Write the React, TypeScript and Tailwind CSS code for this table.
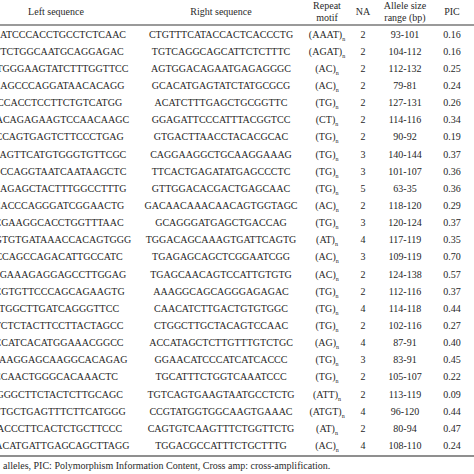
import React from "react";

type Row = [string, string, string, string, string, string, string];

const rows: Row[] = [
  ["GCA", "TCCCACCTGCCTCTCAAC", "CTGTTTCATACCACTCACCCTG", "AAAT", "2", "93-101", "0.16"],
  ["AT", "TCTGGCAATGCAGGAGAC", "TGTCAGGCAGCATTCTCTTTC", "AGAT", "2", "104-112", "0.16"],
  ["CT", "TGGGAAGTATCTTTGGTTCC", "AGTGGACAGAATGAGAGGGC", "AC", "2", "112-132", "0.25"],
  ["TC", "AGCCCAGGATAACACAGG", "GCACATGAGTATCTATGCGCG", "AC", "2", "79-81", "0.24"],
  ["G", "CCACCTCCTTCTGTCATGG", "ACATCTTTGAGCTGCGGTTC", "TG", "2", "127-131", "0.26"],
  ["TCA", "CAGAGAAGTCCAACAAGC", "GGAGATTCCCATTTACGGTCC", "CT", "2", "114-116", "0.34"],
  ["AC", "CAGTGAGTCTTCCCTGAG", "GTGACTTAACCTACACGCAC", "TG", "2", "90-92", "0.19"],
  ["GCA", "GTTCATGTGGGTGTTCGC", "CAGGAAGGCTGCAAGGAAAG", "TG", "3", "140-144", "0.37"],
  ["AG", "CCAGGTAATCAATAAGCTC", "TTCACTGAGATATGAGCCCTC", "TG", "3", "101-107", "0.36"],
  ["GA", "AGAGCTACTTTGGCCTTTG", "GTTGGACACGACTGAGCAAC", "TG", "5", "63-35", "0.36"],
  ["TC", "ACCCAGGGATCGGAACTG", "GACAACAAACAACAGTGGTAGC", "AC", "2", "118-120", "0.29"],
  ["TC", "GAAGGCACCTGGTTTAAC", "GCAGGGATGAGCTGACCAG", "TG", "3", "120-124", "0.37"],
  ["CAG", "TGTGATAAACCACAGTGGG", "TGGACAGCAAAGTGATTCAGTG", "AT", "4", "117-119", "0.35"],
  ["TC", "CAGCCAGACATTGCCATC", "TGAGAGCAGCTCGGAATCGG", "AC", "3", "109-119", "0.70"],
  ["AC", "GAAAGAGGAGCCTTGGAG", "TGAGCAACAGTCCATTGTGTG", "AC", "2", "124-138", "0.57"],
  ["AC", "GTGTTCCCAGCAGAAGTG", "AAAGGCAGCAGGGAGAGAC", "TG", "2", "112-116", "0.37"],
  ["T", "TGGCTTGATCAGGGTTCC", "CAACATCTTGACTGTGTGGC", "TG", "4", "114-118", "0.44"],
  ["T", "TCTCTACTTCCTTACTAGCC", "CTGGCTTGCTACAGTCCAAC", "TG", "2", "102-116", "0.27"],
  ["TC", "CATCACATGGAAACGGCC", "ACCATAGCTCTTGTTTGTCTGC", "AG", "4", "87-91", "0.40"],
  ["GA", "AAGGAGCAAGGCACAGAG", "GGAACATCCCATCATCACCC", "TG", "3", "83-91", "0.45"],
  ["C", "CAACTGGGCACAAACTC", "TGCATTTCTGGTCAAATCCC", "TG", "2", "105-107", "0.22"],
  ["A", "GGGCTTCTACTCTTGCAGC", "TGTCAGTGAAGTAATGCCTCTG", "ATT", "2", "113-119", "0.09"],
  ["AC", "TGCTGAGTTTCTTCATGGG", "CCGTATGGTGGCAAGTGAAAC", "ATGT", "4", "96-120", "0.44"],
  ["GA", "CCCTTCACTCTGCTTCCC", "CAGTGTCAAGTTTCTGGTTCTG", "AT", "2", "80-94", "0.47"],
  ["TCA", "CATGATTGAGCAGCTTAGG", "TGGACGCCATTTCTGCTTTG", "AC", "4", "108-110", "0.24"],
];

const grid = "grid grid-cols-[140px_162px_50px_22px_62px_32px]";
const cell = "flex justify-center items-center";

export default function App() {
  return (
    <div className="w-[474px] h-[474px] overflow-hidden bg-white text-[#1f1f1f] font-['Liberation_Serif',serif] text-[10px] leading-[12px]">
      <div className={`${grid} h-[26px] items-center border-b-2 border-[#9a9a9a] text-[#2a2a2a]`}>
        <div className={`${cell} pr-[28px]`}>
          <span className="whitespace-nowrap">Left sequence</span>
        </div>
        <div className={cell}>
          <span className="whitespace-nowrap">Right sequence</span>
        </div>
        <div className={`${cell} flex-col text-center`}>
          <span>Repeat</span>
          <span>motif</span>
        </div>
        <div className={cell}>NA</div>
        <div className={`${cell} flex-col text-center`}>
          <span className="whitespace-nowrap">Allele size</span>
          <span className="whitespace-nowrap">range (bp)</span>
        </div>
        <div className={cell}>PIC</div>
      </div>

      <div className="border-b-2 border-[#8f8f8f]">
        {rows.map((r, i) => (
          <div key={i} className={`${grid} h-[17.15px] items-center`}>
            <div className={`${cell} pr-[28px]`}>
              <span className="shrink-0 whitespace-nowrap">
                {r[0]}
                {r[1]}
              </span>
            </div>
            <div className={cell}>
              <span className="shrink-0 whitespace-nowrap">{r[2]}</span>
            </div>
            <div className={cell}>
              <span className="whitespace-nowrap">
                ({r[3]})
                <span className="relative top-[3px] text-[6px] leading-none">n</span>
              </span>
            </div>
            <div className={cell}>{r[4]}</div>
            <div className={cell}>{r[5]}</div>
            <div className={cell}>{r[6]}</div>
          </div>
        ))}
      </div>

      <div className="h-[18px] flex items-center pl-[3px] whitespace-nowrap text-[#2a2a2a]">
        alleles, PIC: Polymorphism Information Content, Cross amp: cross-amplification.
      </div>
    </div>
  );
}
